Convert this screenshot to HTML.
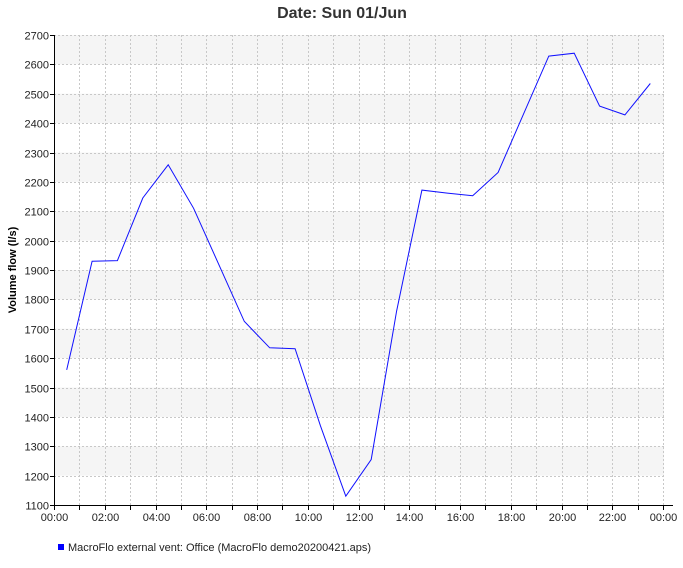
<!DOCTYPE html>
<html><head><style>
html,body{margin:0;padding:0;background:#fff;}
svg text{font-family:"Liberation Sans",Arial,sans-serif;}
</style></head><body>
<svg width="683" height="563" xmlns="http://www.w3.org/2000/svg">
<rect width="683" height="563" fill="#fff"/>
<text x="342" y="18" font-size="16" font-weight="bold" text-anchor="middle" fill="#333">Date: Sun 01/Jun</text>
<g fill="#f5f5f5">
<rect x="54" y="35" width="610" height="29.375"/>
<rect x="54" y="93.75" width="610" height="29.375"/>
<rect x="54" y="152.5" width="610" height="29.375"/>
<rect x="54" y="211.25" width="610" height="29.375"/>
<rect x="54" y="270" width="610" height="29.375"/>
<rect x="54" y="328.75" width="610" height="29.375"/>
<rect x="54" y="387.5" width="610" height="29.375"/>
<rect x="54" y="446.25" width="610" height="29.375"/>
</g>
<g stroke="#c8c8c8" stroke-width="1" stroke-dasharray="2,2" fill="none" id="grid"></g>
<g stroke="#000" stroke-width="1" id="ticks"></g>
<g font-size="11" fill="#222" id="labels"></g>
<polyline fill="none" stroke="#1010ff" stroke-width="1" points="66.7,369.9 92.1,261.2 117.4,260.6 142.8,198 168.2,164.8 193.6,208.3 244.3,321.4 269.7,347.8 295.1,348.7 320.4,425.7 345.8,496.2 371.2,459.5 396.6,311.1 421.9,190.1 447.3,193.1 472.7,195.7 498.1,172.5 523.4,114.3 548.8,56.1 574.2,53.2 599.6,106.1 624.9,114.9 650.3,83.5"/>
<line x1="54.5" y1="35" x2="54.5" y2="505" stroke="#000"/>
<line x1="54" y1="505.5" x2="673" y2="505.5" stroke="#000"/>
<text transform="translate(16,270) rotate(-90)" font-size="11" font-weight="bold" text-anchor="middle" fill="#000">Volume flow (l/s)</text>
<rect x="58" y="544" width="6" height="6" fill="#0000ff"/>
<text x="68" y="551" font-size="11" fill="#222">MacroFlo external vent: Office (MacroFlo demo20200421.aps)</text>
</svg>
<script>
var ns="http://www.w3.org/2000/svg";
function el(p,t,a,txt){var e=document.createElementNS(ns,t);for(var k in a)e.setAttribute(k,a[k]);if(txt)e.textContent=txt;document.getElementById(p).appendChild(e);}
for(var i=0;i<=16;i++){var y=Math.round(35+29.375*i)+0.5;
 if(i<16)el("grid","line",{x1:54,y1:y,x2:664,y2:y});
 el("ticks","line",{x1:50,y1:y,x2:54,y2:y});
 el("labels","text",{x:49,y:y+4,"text-anchor":"end"},String(2700-100*i));}
for(var h=0;h<=24;h++){var x=Math.round(54+25.375*h)+0.5;
 if(h>0)el("grid","line",{x1:x,y1:35,x2:x,y2:505});
 el("ticks","line",{x1:x,y1:505,x2:x,y2:510});
 if(h%2==0){var hh=(h%24);el("labels","text",{x:x,y:521,"text-anchor":"middle"},(hh<10?"0":"")+hh+":00");}}
</script>
</body></html>
